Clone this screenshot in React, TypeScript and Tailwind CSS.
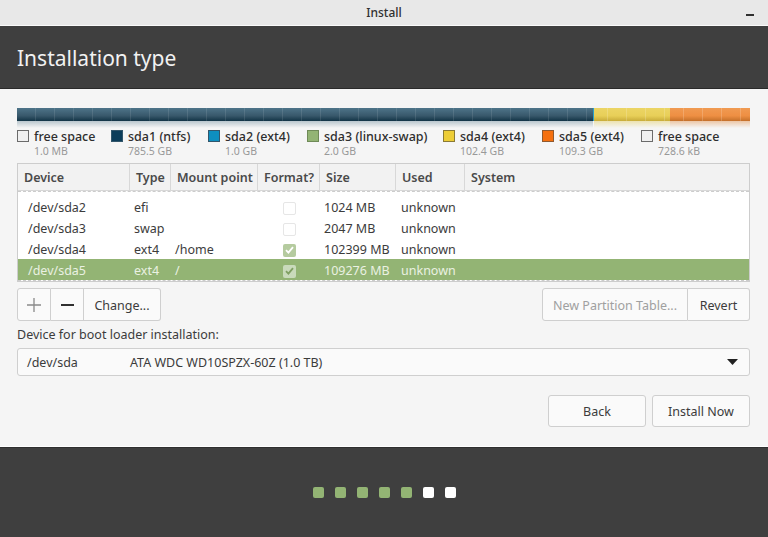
const columns = [
  { label: "Device", width: "w-[112px]" },
  { label: "Type", width: "w-[41px]" },
  { label: "Mount point", width: "w-[87px]" },
  { label: "Format?", width: "w-[62px]" },
  { label: "Size", width: "w-[76px]" },
  { label: "Used", width: "w-[69px]" },
  { label: "System", width: "flex-1" },
];

const rows = [
  { device: "/dev/sda2", type: "efi", mount: "", format: false, size: "1024 MB" },
  { device: "/dev/sda3", type: "swap", mount: "", format: false, size: "2047 MB" },
  { device: "/dev/sda4", type: "ext4", mount: "/home", format: true, size: "102399 MB" },
  { device: "/dev/sda5", type: "ext4", mount: "/", format: true, size: "109276 MB", selected: true },
];

const legend = [
  { name: "free space", size: "1.0 MB", swatch: "bg-[#f0f0f0] border-[#6b6b6b]", width: "w-[94px]" },
  { name: "sda1 (ntfs)", size: "785.5 GB", swatch: "bg-[#0c3d5a] border-[#33566b]", width: "w-[97px]" },
  { name: "sda2 (ext4)", size: "1.0 GB", swatch: "bg-[#0e8fc0] border-[#33566b]", width: "w-[99px]" },
  { name: "sda3 (linux-swap)", size: "2.0 GB", swatch: "bg-[#93b474] border-[#6f8a58]", width: "w-[136px]" },
  { name: "sda4 (ext4)", size: "102.4 GB", swatch: "bg-[#edcd36] border-[#8a7a35]", width: "w-[99px]" },
  { name: "sda5 (ext4)", size: "109.3 GB", swatch: "bg-[#f5700f] border-[#8f5a30]", width: "w-[99px]" },
  { name: "free space", size: "728.6 kB", swatch: "bg-[#f0f0f0] border-[#6b6b6b]", width: "w-[90px]" },
];

const tickDark =
  "bg-[repeating-linear-gradient(90deg,transparent_0,transparent_18px,rgba(255,255,255,0.1)_18px,rgba(255,255,255,0.1)_19px)]";
const tickLight =
  "bg-[repeating-linear-gradient(90deg,transparent_0,transparent_13px,rgba(255,255,255,0.18)_13px,rgba(255,255,255,0.18)_14px,transparent_14px,transparent_19px)]";

function Check({ on, selected }: { on: boolean; selected?: boolean }) {
  return (
    <div
      className={
        "flex h-[13px] w-[13px] items-center justify-center rounded-[2px] " +
        (on ? (selected ? "bg-[#c9dabb]" : "bg-[#b5cb9f]") : "border border-[#e6e6e6] bg-white")
      }
    >
      {on && (
        <svg width="9" height="8" viewBox="0 0 9 8" fill="none">
          <path d="M1 4.2 3.4 6.6 8 1.2" stroke={selected ? "#7f9f62" : "#fff"} strokeWidth="1.8" />
        </svg>
      )}
    </div>
  );
}

function Btn({ children, className = "" }: { children: React.ReactNode; className?: string }) {
  return (
    <div
      className={
        "flex items-center justify-center rounded-[3px] border border-[#cfcfcf] bg-[#fafafa] text-[#3c3c3c] " +
        className
      }
    >
      {children}
    </div>
  );
}

export default function App() {
  return (
    <div className="flex h-[537px] w-[768px] flex-col overflow-hidden bg-[#f5f5f5] font-['Noto_Sans',sans-serif] text-[12.5px] text-[#3c3c3c]">
      {/* window title */}
      <div className="relative flex h-[26px] shrink-0 items-center justify-center border-b border-[#fafafa] bg-[#e8e8e8] text-[12px] font-medium text-[#303030]">
        Install
        <div className="absolute right-[14px] top-[14px] h-[1.5px] w-[8px] bg-[#303030]" />
      </div>

      {/* header */}
      <div className="flex h-[63px] shrink-0 items-center border-b border-[#2a2a2a] bg-[#3f3f3f] pl-[17px] pt-[4px] text-[21px] text-[#f2f2f2]">
        Installation type
      </div>

      <div className="flex flex-1 flex-col pl-[17px] pr-[18px] pt-[19px]">
        {/* partition bar */}
        <div className="flex h-[20px] shrink-0">
          <div className="flex w-[576px] flex-col">
            <div className="h-[13px] bg-[linear-gradient(#4e7489,#38586b_60%,#123446)]">
              <div className={"h-full " + tickDark} />
            </div>
            <div className="h-[7px] bg-[linear-gradient(#b9c6cd,#f5f5f5)]" />
          </div>
          <div className="flex w-[1px] flex-col">
            <div className="h-[13px] bg-[#2aa0cc]" />
          </div>
          <div className="flex w-[76px] flex-col">
            <div className="h-[13px] bg-[linear-gradient(#ecd565,#e8cf58_60%,#c8ac3a)]">
              <div className={"h-full " + tickLight} />
            </div>
            <div className="h-[7px] bg-[linear-gradient(#ece2b0,#f5f5f5)]" />
          </div>
          <div className="flex flex-1 flex-col">
            <div className="h-[13px] bg-[linear-gradient(#f09a52,#ee8f43_60%,#c4702a)]">
              <div className={"h-full " + tickLight} />
            </div>
            <div className="h-[7px] bg-[linear-gradient(#ecc6a6,#f5f5f5)]" />
          </div>
        </div>

        {/* legend */}
        <div className="mt-[1px] flex h-[34px] shrink-0">
          {legend.map((item, i) => (
            <div key={i} className={"flex shrink-0 " + item.width}>
              <div className={"mt-[1px] h-[12px] w-[12px] shrink-0 border " + item.swatch} />
              <div className="ml-[5px] whitespace-nowrap">
                <div className="text-[12.5px] font-medium leading-[16px] text-[#2e2e2e]">{item.name}</div>
                <div className="text-[10.5px] leading-[13px] text-[#999]">{item.size}</div>
              </div>
            </div>
          ))}
        </div>

        {/* partition table */}
        <div className="h-[119px] shrink-0 border border-[#cdcdcd] bg-white">
          <div className="flex h-[27px] border-b border-[#d8d8d8] bg-[#f2f2f2] font-semibold text-[#4a4a4a]">
            {columns.map((c) => (
              <div key={c.label} className={"flex items-center border-r border-[#d8d8d8] pl-[6px] pt-[2px] last:border-r-0 " + c.width}>
                {c.label}
              </div>
            ))}
          </div>
          <div className="border-t border-dashed border-[#cccccc] pt-[4px]">
            {rows.map((r) => (
              <div
                key={r.device}
                className={"flex h-[21px] items-center pt-[3px] " + (r.selected ? "bg-[#93b474] text-[#eaf1e2]" : "")}
              >
                <div className="w-[112px] pl-[10px]">{r.device}</div>
                <div className="w-[41px] pl-[4px]">{r.type}</div>
                <div className="w-[87px] pl-[4px]">{r.mount}</div>
                <div className="flex w-[62px] justify-center">
                  <Check on={r.format} selected={r.selected} />
                </div>
                <div className="w-[76px] pl-[4px]">{r.size}</div>
                <div className="pl-[5px]">unknown</div>
              </div>
            ))}
            <div className="border-t border-dashed border-[#cccccc]" />
          </div>
        </div>

        {/* partition actions */}
        <div className="mt-[6px] flex h-[33px] shrink-0">
          <Btn className="w-[34px] rounded-r-none">
            <svg width="14" height="14" viewBox="0 0 14 14">
              <path d="M7 0v14M0 7h14" stroke="#8a8a8a" strokeWidth="1.3" />
            </svg>
          </Btn>
          <Btn className="w-[33px] rounded-none border-l-0">
            <div className="h-[2px] w-[13px] bg-[#303030]" />
          </Btn>
          <Btn className="w-[77px] rounded-l-none border-l-0 pt-[3px]">Change...</Btn>
          <Btn className="ml-auto w-[146px] rounded-r-none bg-[#f5f5f5] pt-[3px] text-[#a0a0a0]">New Partition Table...</Btn>
          <Btn className="w-[62px] rounded-l-none border-l-0 pt-[3px] text-[#2e2e2e]">Revert</Btn>
        </div>

        <div className="mt-[5px] h-[18px] shrink-0 leading-[18px]">Device for boot loader installation:</div>

        {/* boot loader combo */}
        <div className="mt-[4px] flex h-[28px] shrink-0 items-center rounded-[3px] border border-[#cfcfcf] bg-[#fafafa] pl-[9px] pr-[11px] pt-[2px]">
          <div className="w-[103px]">/dev/sda</div>
          <div>ATA WDC WD10SPZX-60Z (1.0 TB)</div>
          <svg className="-mt-[2px] ml-auto" width="11" height="6" viewBox="0 0 11 6">
            <path d="M0 0h11L5.5 6z" fill="#222" />
          </svg>
        </div>

        {/* navigation */}
        <div className="mt-[19px] flex h-[32px] shrink-0 justify-end gap-[6px]">
          <Btn className="w-[98px] pt-[2px]">Back</Btn>
          <Btn className="w-[98px] pt-[2px]">Install Now</Btn>
        </div>
      </div>

      {/* progress footer */}
      <div className="flex h-[90px] shrink-0 items-center justify-center gap-[11px] border-t border-[#2f2f2f] bg-[#3f3f3f] shadow-[0_-1px_0_#ffffff]">
        {[0, 1, 2, 3, 4].map((i) => (
          <div key={i} className="h-[11px] w-[11px] rounded-[2px] bg-[#93b474]" />
        ))}
        {[5, 6].map((i) => (
          <div key={i} className="h-[11px] w-[11px] rounded-[2px] bg-white" />
        ))}
      </div>
    </div>
  );
}
